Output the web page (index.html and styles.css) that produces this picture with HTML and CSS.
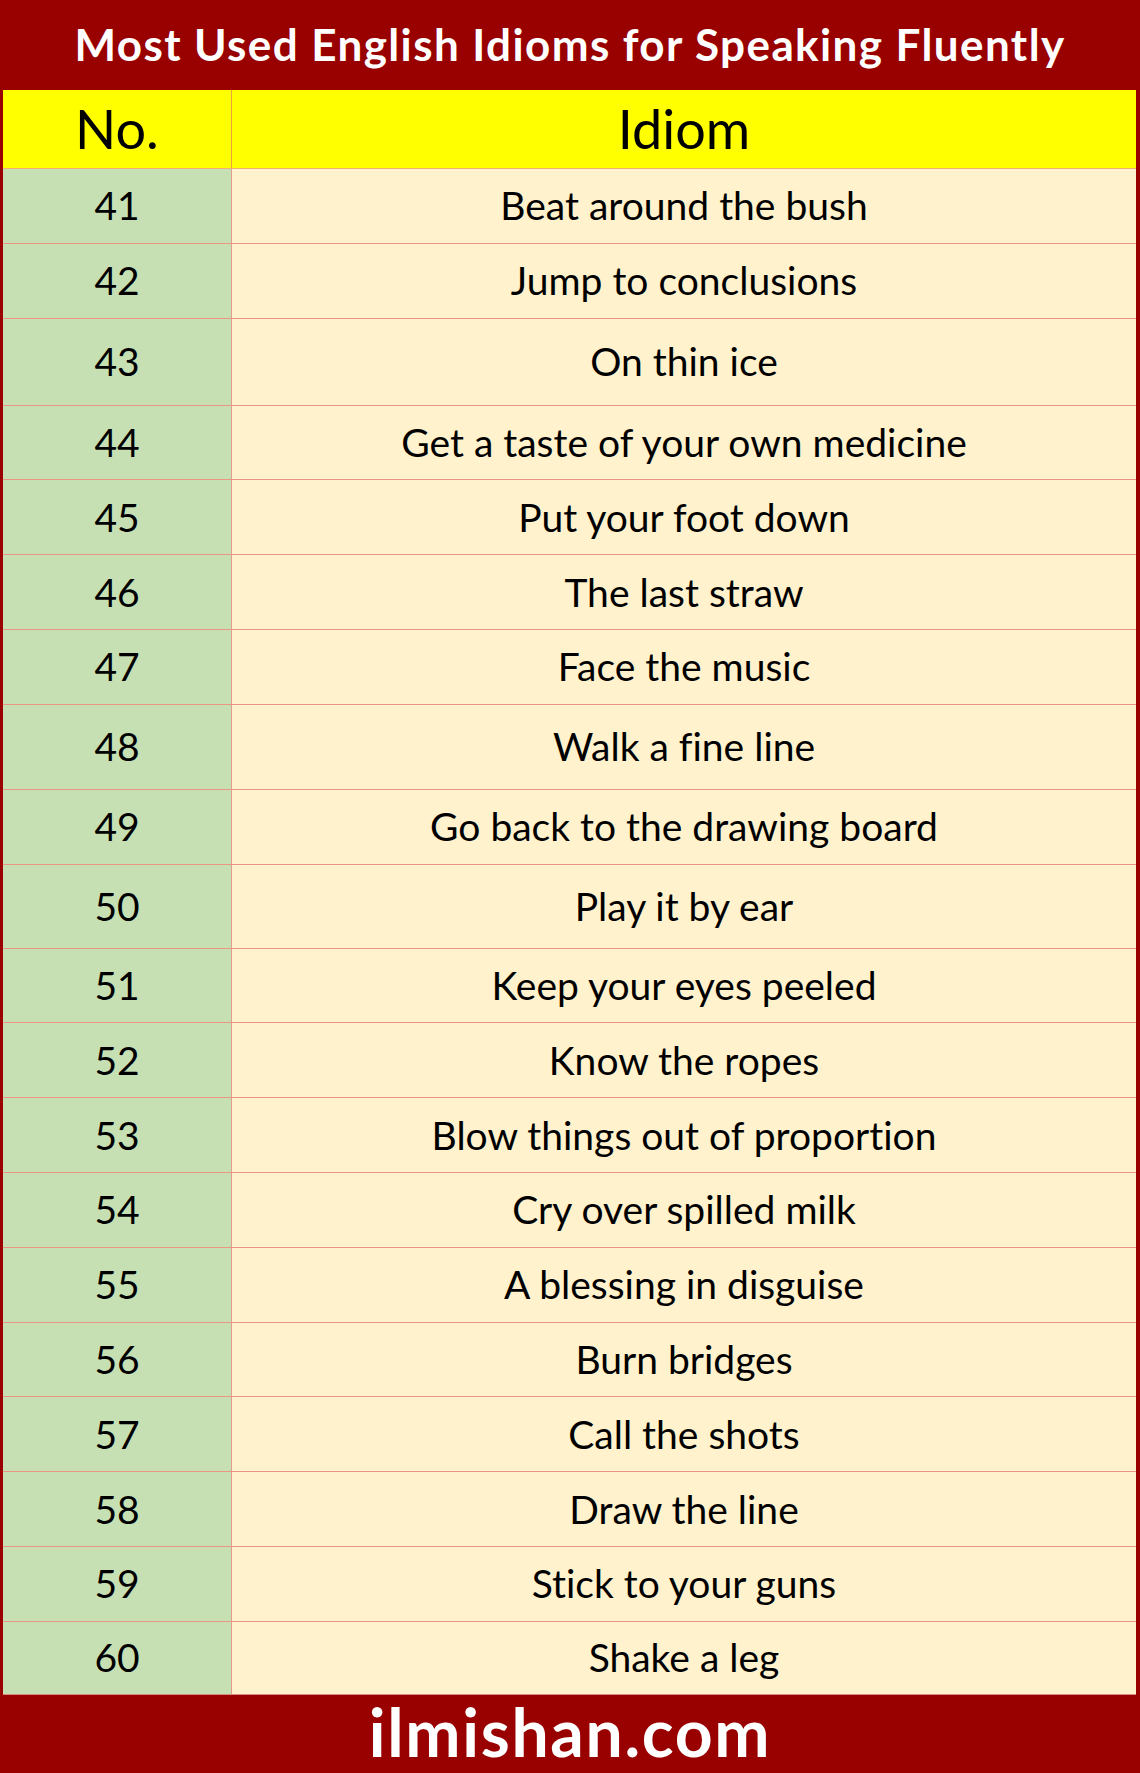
FILE: index.html
```html
<!DOCTYPE html>
<html lang="en">
<head>
<meta charset="utf-8">
<title>Most Used English Idioms for Speaking Fluently</title>
<link rel="stylesheet" href="styles.css">
</head>
<body>
<div class="sheet">
  <h1 class="title">Most Used English Idioms for Speaking Fluently</h1>
  <div class="table">
    <div class="row head"><div class="no">No.</div><div class="idiom">Idiom</div></div>
    <div class="row"><div class="no">41</div><div class="idiom">Beat around the bush</div></div>
    <div class="row"><div class="no">42</div><div class="idiom">Jump to conclusions</div></div>
    <div class="row tall1"><div class="no">43</div><div class="idiom">On thin ice</div></div>
    <div class="row"><div class="no">44</div><div class="idiom">Get a taste of your own medicine</div></div>
    <div class="row"><div class="no">45</div><div class="idiom">Put your foot down</div></div>
    <div class="row"><div class="no">46</div><div class="idiom">The last straw</div></div>
    <div class="row"><div class="no">47</div><div class="idiom">Face the music</div></div>
    <div class="row tall2"><div class="no">48</div><div class="idiom">Walk a fine line</div></div>
    <div class="row"><div class="no">49</div><div class="idiom">Go back to the drawing board</div></div>
    <div class="row tall3"><div class="no">50</div><div class="idiom">Play it by ear</div></div>
    <div class="row"><div class="no">51</div><div class="idiom">Keep your eyes peeled</div></div>
    <div class="row"><div class="no">52</div><div class="idiom">Know the ropes</div></div>
    <div class="row"><div class="no">53</div><div class="idiom">Blow things out of proportion</div></div>
    <div class="row"><div class="no">54</div><div class="idiom">Cry over spilled milk</div></div>
    <div class="row"><div class="no">55</div><div class="idiom">A blessing in disguise</div></div>
    <div class="row"><div class="no">56</div><div class="idiom">Burn bridges</div></div>
    <div class="row"><div class="no">57</div><div class="idiom">Call the shots</div></div>
    <div class="row"><div class="no">58</div><div class="idiom">Draw the line</div></div>
    <div class="row"><div class="no">59</div><div class="idiom">Stick to your guns</div></div>
    <div class="row last"><div class="no">60</div><div class="idiom">Shake a leg</div></div>
  </div>
  <div class="footer">ilmishan.com</div>
</div>
</body>
</html>
```
FILE: styles.css
```css
* { box-sizing: border-box; }
html, body { margin: 0; padding: 0; }
body {
  background: #990000;
  font-family: Lato, "Open Sans", sans-serif;
  font-variant-ligatures: none;
  color: #000;
}
.sheet {
  width: 1140px;
  height: 1773px;
  display: flex;
  flex-direction: column;
}
.title {
  flex: 0 0 90px;
  margin: 0;
  height: 90px;
  display: flex;
  align-items: center;
  justify-content: center;
  color: #fff;
  font-family: Lato, sans-serif;
  font-weight: 700;
  font-size: 44px;
  line-height: 1;
  letter-spacing: 1.4px;
  padding-bottom: 2px;
}
.table {
  flex: 0 0 auto;
  margin: 0 4px 0 3px;
  display: flex;
  flex-direction: column;
}
.row {
  flex: 0 0 auto;
  display: grid;
  grid-template-columns: 229px 1fr;
  height: 74.8px;
  border-bottom: 1px solid #ec9585;
}
.row .no, .row .idiom {
  display: flex;
  align-items: center;
  justify-content: center;
  font-size: 39px;
  line-height: 1;
}
.row .no {
  background: #c6e0b4;
  border-right: 1px solid #e39a8c;
}
.row .idiom {
  background: #fff2cc;
}
.row.head {
  height: 79px;
  border-bottom: 1px solid #f2b06e;
}
.row.head .no, .row.head .idiom {
  background: #ffff00;
  font-size: 54px;
}
.row.head .no { border-right: 1px solid #f0a040; }
.row.tall1 { height: 87px; }
.row.tall2 { height: 85px; }
.row.tall3 { height: 84px; }
.row.last { height: 73px; border-bottom: 1px solid #d98a80; }
.footer {
  flex: 1 1 0;
  min-height: 0;
  display: flex;
  align-items: center;
  justify-content: center;
  color: #fff;
  font-weight: 700;
  font-size: 66px;
  line-height: 1;
  letter-spacing: 1.7px;
  padding-bottom: 4px;
}
```
